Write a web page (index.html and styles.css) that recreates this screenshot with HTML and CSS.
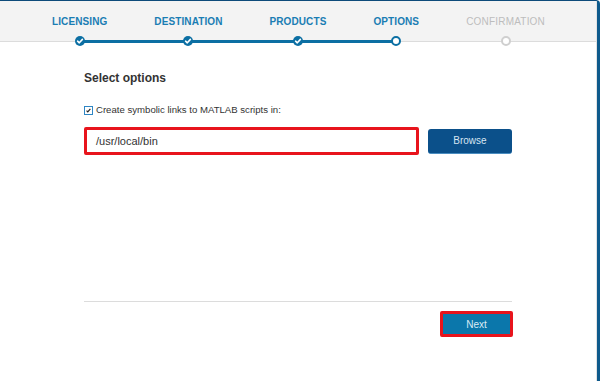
FILE: index.html
```html
<!DOCTYPE html>
<html>
<head>
<meta charset="utf-8">
<link rel="stylesheet" href="styles.css">
</head>
<body>
<div class="window">
  <div class="frame">
    <header class="header">
      <div class="track"></div>
      <ol class="steps">
        <li class="step done">LICENSING<span class="dot"><svg viewBox="0 0 10 10" width="10" height="10"><path d="M2.6 5.2 L4.3 6.8 L7.4 3.4" fill="none" stroke="#fff" stroke-width="1.6" stroke-linecap="round" stroke-linejoin="round"/></svg></span></li>
        <li class="step done">DESTINATION<span class="dot"><svg viewBox="0 0 10 10" width="10" height="10"><path d="M2.6 5.2 L4.3 6.8 L7.4 3.4" fill="none" stroke="#fff" stroke-width="1.6" stroke-linecap="round" stroke-linejoin="round"/></svg></span></li>
        <li class="step done">PRODUCTS<span class="dot"><svg viewBox="0 0 10 10" width="10" height="10"><path d="M2.6 5.2 L4.3 6.8 L7.4 3.4" fill="none" stroke="#fff" stroke-width="1.6" stroke-linecap="round" stroke-linejoin="round"/></svg></span></li>
        <li class="step current">OPTIONS<span class="dot"></span></li>
        <li class="step todo">CONFIRMATION<span class="dot"></span></li>
      </ol>
    </header>
    <main class="content">
      <h1 class="title">Select options</h1>
      <label class="check-row">
        <span class="checkbox"><svg viewBox="0 0 9 9" width="9" height="9"><path d="M2 4.6 L3.6 6.3 L6.9 2.3" fill="none" stroke="#222" stroke-width="1.5"/></svg></span>
        <span>Create symbolic links to MATLAB scripts in:</span>
      </label>
      <div class="path-row">
        <div class="path-input">/usr/local/bin</div>
        <button class="browse">Browse</button>
      </div>
    </main>
    <footer class="footer">
      <div class="divider"></div>
      <div class="actions">
        <button class="next">Next</button>
      </div>
    </footer>
  </div>
</div>
</body>
</html>
```
FILE: styles.css
```css
* { box-sizing: border-box; }
html, body { margin: 0; padding: 0; background: #fff; }
body { width: 600px; height: 381px; overflow: hidden; font-family: "Liberation Sans", Arial, sans-serif; }

.window {
  height: 381px;
  border-top: 1px solid #0d4b7a;
  border-right: 3px solid #0e5a8c;
  border-top-right-radius: 4px;
  overflow: hidden;
}
.frame {
  height: 100%;
  border-right: 1px solid #e2e2e2;
  display: flex;
  flex-direction: column;
  background: #fff;
}

.header {
  position: relative;
  height: 41px;
  background: #f3f3f3;
  border-bottom: 1px solid #dcdcdc;
}
.track {
  position: absolute;
  left: 79px;
  width: 317px;
  top: 39px;
  height: 3px;
  background: #0c6fa3;
}
.steps {
  list-style: none;
  margin: 0;
  padding: 15px 0 0 52px;
  display: flex;
  gap: 47px;
}
.step {
  position: relative;
  font-size: 10px;
  line-height: 12px;
  font-weight: bold;
  letter-spacing: 0.1px;
  color: #1a7db3;
  height: 26px;
}
.step.todo { color: #bdbdbd; font-weight: normal; letter-spacing: 0.2px; }
.dot {
  position: absolute;
  top: 20px;
  left: 50%;
  width: 10px;
  height: 10px;
  margin-left: -5px;
  border-radius: 50%;
  display: flex;
}
.done .dot { background: #0c6fa3; }
.current .dot { background: #fff; border: 2px solid #0c6fa3; }
.todo .dot { background: #fff; border: 2px solid #cfcfcf; }

.content {
  flex: 1;
  padding: 29px 84px 0 84px;
}
.title {
  margin: 0;
  font-size: 12px;
  line-height: 14px;
  font-weight: bold;
  color: #333;
}
.check-row {
  display: flex;
  align-items: center;
  gap: 3px;
  margin-top: 19px;
  font-size: 9.6px;
  line-height: 12px;
  color: #333;
}
.checkbox {
  width: 9px;
  height: 9px;
  border: 1px solid #2f86c4;
  background: #fff;
  display: flex;
  align-items: center;
  justify-content: center;
}
.checkbox svg { width: 7px; height: 7px; }
.path-row {
  display: flex;
  align-items: center;
  gap: 9px;
  margin-top: 11px;
}
.path-input {
  width: 335px;
  height: 28px;
  border: 3px solid #e8141c;
  border-radius: 2px;
  padding-left: 9px;
  font-size: 11px;
  line-height: 22px;
  color: #333;
  background: #fff;
}
.browse {
  width: 84px;
  height: 25px;
  border: none;
  border-bottom: 1px solid #4a8dc0;
  border-radius: 3px;
  background: #0b508a;
  color: #d7e5f1;
  font-family: "Liberation Sans", Arial, sans-serif;
  font-size: 10px;
  padding: 0;
}

.footer {
  padding: 0 84px 44px 84px;
}
.divider {
  height: 1px;
  background: #dcdcdc;
}
.actions {
  display: flex;
  justify-content: flex-end;
  margin-top: 9px;
  margin-right: -1px;
}
.next {
  width: 73px;
  height: 26px;
  border: 3px solid #e8141c;
  border-radius: 2px;
  background: #0b77ab;
  color: #d9ebf5;
  font-family: "Liberation Sans", Arial, sans-serif;
  font-size: 10px;
  padding: 0;
}
```
